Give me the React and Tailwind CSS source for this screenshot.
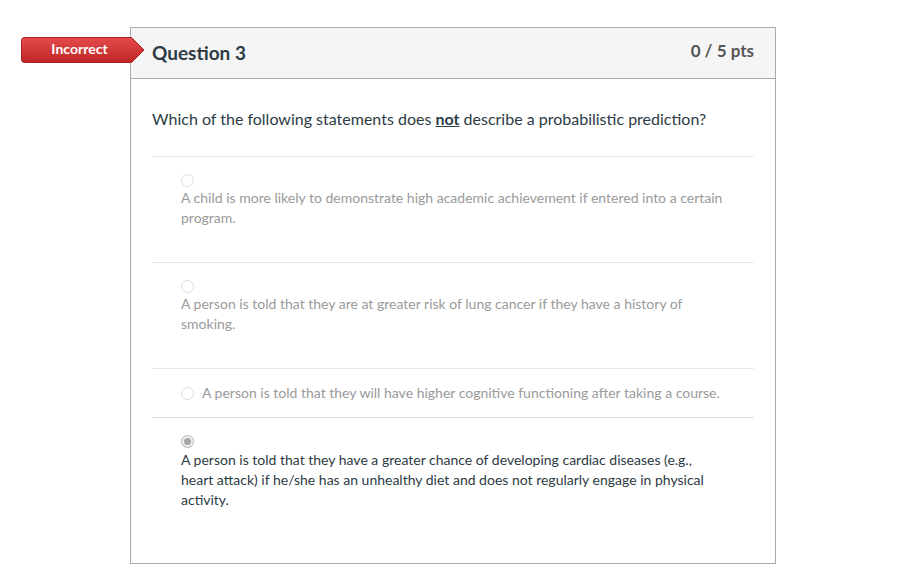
import React from 'react'

const answers = [
  {
    id: 1,
    text: 'A child is more likely to demonstrate high academic achievement if entered into a certain program.',
    selected: false,
    inline: false,
  },
  {
    id: 2,
    text: 'A person is told that they are at greater risk of lung cancer if they have a history of smoking.',
    selected: false,
    inline: false,
  },
  {
    id: 3,
    text: 'A person is told that they will have higher cognitive functioning after taking a course.',
    selected: false,
    inline: true,
  },
  {
    id: 4,
    text: 'A person is told that they have a greater chance of developing cardiac diseases (e.g., heart attack) if he/she has an unhealthy diet and does not regularly engage in physical activity.',
    selected: true,
    inline: false,
  },
]

const Radio = ({ checked }) => (
  <span
    className={`inline-flex items-center justify-center w-[13px] h-[13px] rounded-full border shrink-0 ${
      checked ? 'border-[#b5b5b5] bg-[#eeeeee]' : 'border-[#dcdcdc] bg-white'
    }`}
  >
    {checked && <span className="block w-[7px] h-[7px] rounded-full bg-[#a5a5a5]" />}
  </span>
)

const IncorrectBadge = () => (
  <div className="absolute left-[-110px] top-[9px] w-[124px] h-[26px]">
    <svg width="124" height="26" viewBox="0 0 124 26" className="absolute inset-0">
      <defs>
        <linearGradient id="badgeGrad" x1="0" y1="0" x2="0" y2="1">
          <stop offset="0" stopColor="#e44a4a" />
          <stop offset="1" stopColor="#bf2727" />
        </linearGradient>
      </defs>
      <path
        d="M3.5 0.5 H110.5 L123 13 L110.5 25.5 H3.5 Q0.5 25.5 0.5 22.5 V3.5 Q0.5 0.5 3.5 0.5 Z"
        fill="url(#badgeGrad)"
        stroke="#a82020"
        strokeWidth="1"
      />
    </svg>
    <div className="relative w-[117px] h-[24px] flex items-center justify-center text-white text-[14px] font-bold leading-none">
      Incorrect
    </div>
  </div>
)

export default function App() {
  return (
    <div
      className="min-h-[580px] bg-white pl-[130px] pt-[27px]"
      style={{ fontFamily: 'Lato, "Open Sans", sans-serif' }}
    >
      <div className="relative w-[646px] h-[537px] border border-[#aaaaaa] bg-white">
        <IncorrectBadge />

        {/* Header */}
        <div className="h-[51px] bg-[#f5f5f5] border-b border-[#aaaaaa] flex items-center justify-between px-[21px]">
          <h2 className="text-[19px] font-bold text-[#2d3b45] mt-[1px]">Question 3</h2>
          <span className="text-[17px] font-bold text-[#555555] mt-[-4px]">0 / 5 pts</span>
        </div>

        {/* Body */}
        <div className="px-[21px] pt-[28px]">
          <p className="text-[16px] leading-[24px] text-[#2d3b45] mb-[25px]">
            Which of the following statements does <span className="font-bold underline">not</span> describe a
            probabilistic prediction?
          </p>

          {answers.map((a) =>
            a.inline ? (
              <div key={a.id} className="border-t border-[#e8e8e8] pl-[29px] pt-[14px] pb-[14px] flex items-center gap-[8px]">
                <Radio checked={a.selected} />
                <span className="text-[14px] leading-[20px] text-[#9a9a9a]">{a.text}</span>
              </div>
            ) : (
              <div
                key={a.id}
                className={`border-t pl-[29px] pr-[20px] pt-[17px] ${
                  a.selected ? 'border-[#dedede] pb-[20px]' : 'border-[#e8e8e8] pb-[34px]'
                }`}
              >
                <div className={`flex ${a.selected ? 'mb-[2px]' : 'mb-[1px]'}`}>
                  <Radio checked={a.selected} />
                </div>
                <p
                  className={`text-[14px] leading-[20px] max-w-[545px] ${
                    a.selected ? 'text-[#2d3b45]' : 'text-[#9a9a9a]'
                  }`}
                >
                  {a.text}
                </p>
              </div>
            )
          )}
        </div>
      </div>
    </div>
  )
}
